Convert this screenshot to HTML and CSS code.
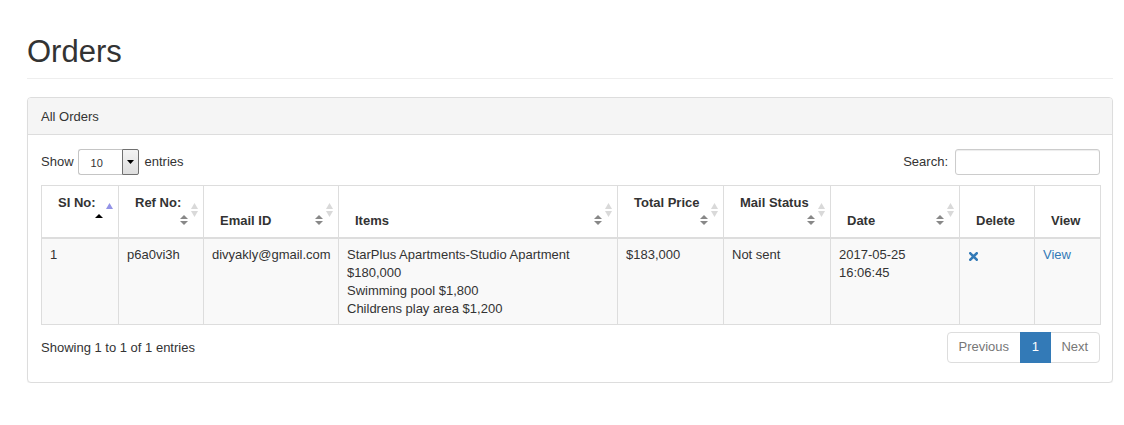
FILE: index.html
```html
<!DOCTYPE html>
<html>
<head>
<meta charset="utf-8">
<title>Orders</title>
<link rel="stylesheet" href="styles.css">
</head>
<body>
<div class="container">
  <div class="page-header"><h1>Orders</h1></div>
  <div class="panel">
    <div class="panel-heading">All Orders</div>
    <div class="panel-body">
      <div class="dt-top">
        <div class="dt-length">
          <span>Show</span>
          <span class="select"><span class="select-val">10</span><span class="select-btn"><svg width="7" height="4" viewBox="0 0 7 4"><polygon points="0,0 7,0 3.5,4" fill="#000"/></svg></span></span>
          <span>entries</span>
        </div>
        <div class="dt-filter">
          <span>Search:</span>
          <span class="search-input"></span>
        </div>
      </div>
      <table class="dt">
        <colgroup>
          <col class="c1"><col class="c2"><col class="c3"><col class="c4"><col class="c5"><col class="c6"><col class="c7"><col class="c8"><col class="c9">
        </colgroup>
        <thead>
          <tr>
            <th>
              <div class="th-label">SI No:</div>
              <div class="th-sortline"><svg class="ic-asc" width="8" height="10" viewBox="0 0 8 10"><polygon points="0,4 4,0 8,4" fill="#000"/></svg></div>
              <svg class="bg-sort" width="7" height="14" viewBox="0 0 7 14"><polygon points="0,6 3.5,0 7,6" fill="#9393e6"/></svg>
            </th>
            <th>
              <div class="th-label">Ref No:</div>
              <div class="th-sortline"><svg class="ic-both" width="8" height="10" viewBox="0 0 8 10"><polygon points="0,4 4,0 8,4" fill="#888"/><polygon points="0,6 8,6 4,10" fill="#888"/></svg></div>
              <svg class="bg-sort" width="7" height="14" viewBox="0 0 7 14"><polygon points="0,6 3.5,0 7,6" fill="#d9d9d9"/><polygon points="0,8 7,8 3.5,14" fill="#d9d9d9"/></svg>
            </th>
            <th>
              <div class="th-row"><span>Email ID</span><svg class="ic-both" width="8" height="10" viewBox="0 0 8 10"><polygon points="0,4 4,0 8,4" fill="#888"/><polygon points="0,6 8,6 4,10" fill="#888"/></svg></div>
              <svg class="bg-sort" width="7" height="14" viewBox="0 0 7 14"><polygon points="0,6 3.5,0 7,6" fill="#d9d9d9"/><polygon points="0,8 7,8 3.5,14" fill="#d9d9d9"/></svg>
            </th>
            <th>
              <div class="th-row"><span>Items</span><svg class="ic-both" width="8" height="10" viewBox="0 0 8 10"><polygon points="0,4 4,0 8,4" fill="#888"/><polygon points="0,6 8,6 4,10" fill="#888"/></svg></div>
              <svg class="bg-sort" width="7" height="14" viewBox="0 0 7 14"><polygon points="0,6 3.5,0 7,6" fill="#d9d9d9"/><polygon points="0,8 7,8 3.5,14" fill="#d9d9d9"/></svg>
            </th>
            <th>
              <div class="th-label">Total Price</div>
              <div class="th-sortline"><svg class="ic-both" width="8" height="10" viewBox="0 0 8 10"><polygon points="0,4 4,0 8,4" fill="#888"/><polygon points="0,6 8,6 4,10" fill="#888"/></svg></div>
              <svg class="bg-sort" width="7" height="14" viewBox="0 0 7 14"><polygon points="0,6 3.5,0 7,6" fill="#d9d9d9"/><polygon points="0,8 7,8 3.5,14" fill="#d9d9d9"/></svg>
            </th>
            <th>
              <div class="th-label">Mail Status</div>
              <div class="th-sortline"><svg class="ic-both" width="8" height="10" viewBox="0 0 8 10"><polygon points="0,4 4,0 8,4" fill="#888"/><polygon points="0,6 8,6 4,10" fill="#888"/></svg></div>
              <svg class="bg-sort" width="7" height="14" viewBox="0 0 7 14"><polygon points="0,6 3.5,0 7,6" fill="#d9d9d9"/><polygon points="0,8 7,8 3.5,14" fill="#d9d9d9"/></svg>
            </th>
            <th>
              <div class="th-row"><span>Date</span><svg class="ic-both" width="8" height="10" viewBox="0 0 8 10"><polygon points="0,4 4,0 8,4" fill="#888"/><polygon points="0,6 8,6 4,10" fill="#888"/></svg></div>
              <svg class="bg-sort" width="7" height="14" viewBox="0 0 7 14"><polygon points="0,6 3.5,0 7,6" fill="#d9d9d9"/><polygon points="0,8 7,8 3.5,14" fill="#d9d9d9"/></svg>
            </th>
            <th><div class="th-row"><span>Delete</span></div></th>
            <th><div class="th-row"><span>View</span></div></th>
          </tr>
        </thead>
        <tbody>
          <tr class="odd">
            <td>1</td>
            <td>p6a0vi3h</td>
            <td class="nowrap">divyakly@gmail.com</td>
            <td>StarPlus Apartments-Studio Apartment<br>$180,000<br>Swimming pool $1,800<br>Childrens play area $1,200</td>
            <td>$183,000</td>
            <td>Not sent</td>
            <td>2017-05-25<br>16:06:45</td>
            <td><a class="del" href="#"><svg width="9" height="9" viewBox="0 0 9 9"><path d="M1.3 1.3 L7.7 7.7 M7.7 1.3 L1.3 7.7" stroke="#337ab7" stroke-width="2.6" stroke-linecap="square"/></svg></a></td>
            <td><a class="link" href="#">View</a></td>
          </tr>
        </tbody>
      </table>
      <div class="dt-bottom">
        <div class="dt-info">Showing 1 to 1 of 1 entries</div>
        <ul class="pagination">
          <li class="disabled"><a href="#">Previous</a></li>
          <li class="active"><a href="#">1</a></li>
          <li class="disabled"><a href="#">Next</a></li>
        </ul>
      </div>
    </div>
  </div>
</div>
</body>
</html>
```
FILE: styles.css
```css
* { box-sizing: border-box; }
body {
  margin: 0;
  font-family: "Liberation Sans", Arial, Helvetica, sans-serif;
  font-size: 13px;
  line-height: 18px;
  color: #333;
  background: #fff;
}
.container { margin-left: 27px; width: 1086px; }
.page-header {
  margin: 34px 0 18px;
  padding-bottom: 9px;
  border-bottom: 1px solid #eee;
}
.page-header h1 {
  margin: 0;
  font-size: 31px;
  font-weight: normal;
  line-height: 35px;
  color: #333;
}
.panel {
  border: 1px solid #ddd;
  border-radius: 4px;
  box-shadow: 0 1px 1px rgba(0,0,0,.05);
  background: #fff;
}
.panel-heading {
  background: #f5f5f5;
  border-bottom: 1px solid #ddd;
  border-radius: 3px 3px 0 0;
  padding: 10px 13px 8px;
  line-height: 18px;
}
.panel-body { padding: 13px 12px 19px 13px; }
.dt-top {
  display: flex;
  justify-content: space-between;
  align-items: center;
  height: 27px;
}
.dt-length, .dt-filter { display: flex; align-items: center; }
.select {
  display: inline-flex;
  width: 61px;
  height: 26px;
  margin: 0 6px 0 4px;
}
.select-val {
  flex: 1;
  border: 1px solid #c5c5c5;
  border-right: none;
  border-radius: 3px 0 0 3px;
  font-size: 11px;
  line-height: 24px;
  padding-left: 12px;
  padding-top: 1px;
  background: #fff;
}
.select-btn {
  width: 17px;
  border: 1px solid #707070;
  border-radius: 0 2px 2px 0;
  background: linear-gradient(#f3f3f3, #dedede);
  display: flex;
  align-items: center;
  justify-content: center;
}
.search-input {
  display: block;
  width: 145px;
  height: 26px;
  margin-left: 7px;
  border: 1px solid #ccc;
  border-radius: 3px;
  box-shadow: inset 0 1px 1px rgba(0,0,0,.075);
}
table.dt {
  width: 1059px;
  table-layout: fixed;
  border-collapse: collapse;
  margin-top: 10px;
}
col.c1 { width: 77px; }
col.c2 { width: 85px; }
col.c3 { width: 135px; }
col.c4 { width: 279px; }
col.c5 { width: 106px; }
col.c6 { width: 107px; }
col.c7 { width: 129px; }
col.c8 { width: 75px; }
col.c9 { width: 66px; }
table.dt th {
  position: relative;
  border: 1px solid #ddd;
  border-bottom-width: 2px;
  padding: 8px 15px 7px 16px;
  vertical-align: bottom;
  text-align: left;
  font-weight: bold;
}
.th-label { height: 18px; white-space: nowrap; }
.th-sortline {
  height: 18px;
  display: flex;
  justify-content: flex-end;
  align-items: center;
}
.th-row {
  height: 18px;
  display: flex;
  justify-content: space-between;
  align-items: center;
  white-space: nowrap;
}
.ic-both { display: block; margin-bottom: 3px; flex: none; }
.ic-asc { display: block; margin-bottom: 5px; flex: none; }
.bg-sort {
  position: absolute;
  right: 5px;
  top: 50%;
  margin-top: -9px;
}
table.dt td {
  border: 1px solid #ddd;
  padding: 7px 8px 6px;
  vertical-align: top;
}
tr.odd td { background: #f9f9f9; }
.nowrap { white-space: nowrap; }
.del svg { display: block; margin: 6px 0 0 1px; }
.link { color: #337ab7; text-decoration: none; }
.dt-bottom {
  display: flex;
  justify-content: space-between;
  align-items: flex-start;
  margin-top: 7px;
}
.dt-info { padding-top: 7px; }
.pagination {
  display: flex;
  list-style: none;
  margin: 0;
  padding: 0;
}
.pagination li a {
  display: block;
  padding: 5.4px 10.8px;
  line-height: 18px;
  border: 1px solid #ddd;
  margin-left: -1px;
  color: #337ab7;
  text-decoration: none;
  background: #fff;
}
.pagination li:first-child a { margin-left: 0; border-radius: 4px 0 0 4px; }
.pagination li:last-child a { border-radius: 0 4px 4px 0; }
.pagination li.disabled a { color: #777; }
.pagination li.active a {
  background: #337ab7;
  border-color: #337ab7;
  color: #fff;
  position: relative;
}
```
